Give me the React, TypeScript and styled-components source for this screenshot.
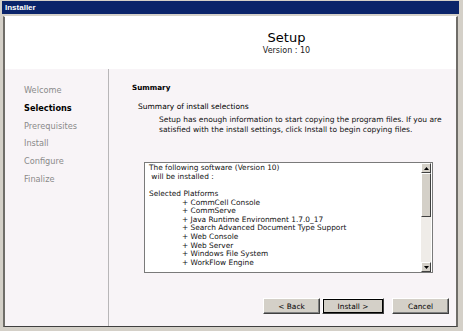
import styled, { createGlobalStyle } from 'styled-components';

const GlobalStyle = createGlobalStyle`
  html, body {
    margin: 0;
    padding: 0;
    background: #d4d0c8;
  }
  * {
    box-sizing: border-box;
  }
`;

const Window = styled.div`
  width: 463px;
  height: 331px;
  background: #d4d0c8;
  padding: 1px 4px 0 2px;
  display: flex;
  flex-direction: column;
  font-family: 'Liberation Sans', Arial, sans-serif;
`;

const TitleBar = styled.div`
  height: 13px;
  background: #0a246a;
  color: #ffffff;
  font-size: 8px;
  font-weight: bold;
  line-height: 13px;
  padding-left: 3px;
`;

const Frame = styled.div`
  margin: 2px 1px 0 1px;
  height: 311px;
  display: flex;
  flex-direction: column;
  border-left: 2px solid #6f6d68;
  border-right: 2px solid #6f6d68;
  border-bottom: 1px solid #404040;
  border-top: 1px solid #ffffff;
`;

const Header = styled.header`
  height: 52px;
  background: #ffffff;
  display: flex;
  flex-direction: column;
  align-items: center;
  padding: 13px 0 0 112px;
  color: #000000;
`;

const Title = styled.div`
  font-family: 'DejaVu Sans', Verdana, sans-serif;
  font-size: 13px;
  line-height: 15px;
`;

const Version = styled.div`
  font-family: 'DejaVu Sans', Verdana, sans-serif;
  font-size: 8px;
  line-height: 12px;
  color: #222222;
`;

const Body = styled.div`
  flex: 1;
  display: flex;
  background: #f8f4f7;
`;

const Sidebar = styled.nav`
  width: 104px;
  border-right: 1px solid #b8b6b8;
  padding: 13px 0 0 19px;
  display: flex;
  flex-direction: column;
`;

const Step = styled.div<{ $active?: boolean }>`
  font-family: 'DejaVu Sans', Verdana, sans-serif;
  font-size: 8.2px;
  line-height: 17.8px;
  color: ${(p) => (p.$active ? '#000000' : '#8a8a8a')};
  font-weight: ${(p) => (p.$active ? 'bold' : 'normal')};
`;

const Main = styled.main`
  flex: 1;
  display: flex;
  flex-direction: column;
  padding: 14px 7px 0 23px;
  color: #000000;
`;

const SectionTitle = styled.div`
  font-family: 'DejaVu Sans', Verdana, sans-serif;
  font-size: 7.2px;
  font-weight: bold;
  line-height: 10px;
`;

const SubTitle = styled.div`
  font-family: 'DejaVu Sans', Verdana, sans-serif;
  font-size: 7.5px;
  line-height: 10px;
  margin: 9px 0 0 6px;
`;

const Paragraph = styled.p`
  font-family: 'DejaVu Sans', Verdana, sans-serif;
  font-size: 7.5px;
  line-height: 10px;
  margin: 3px 0 0 27px;
  color: #111111;
  white-space: nowrap;
`;

const ListBox = styled.div`
  margin: 27px 0 0 12px;
  width: 289px;
  height: 111px;
  border: 1px solid #7a7a7a;
  background: #ffffff;
  display: flex;
`;

const ListText = styled.div`
  flex: 1;
  padding: 1px 0 0 4px;
  overflow: hidden;
`;

const ListLine = styled.div<{ $indent?: boolean }>`
  font-family: 'DejaVu Sans', Verdana, sans-serif;
  font-size: 7.4px;
  line-height: 8.65px;
  height: 8.65px;
  color: #111111;
  white-space: pre;
  padding-left: ${(p) => (p.$indent ? '33px' : '0')};
`;

const ScrollBar = styled.div`
  width: 10px;
  background: #efece8;
  display: flex;
  flex-direction: column;
  margin-right: 1px;
`;

const ScrollArrow = styled.div`
  height: 10px;
  background: #d4d0c8;
  border: 1px solid;
  border-color: #ffffff #404040 #404040 #ffffff;
  display: flex;
  align-items: center;
  justify-content: center;
`;

const Thumb = styled.div`
  height: 44px;
  background: #d4d0c8;
  border: 1px solid;
  border-color: #ffffff #404040 #404040 #ffffff;
`;

const Track = styled.div`
  flex: 1;
`;

const ButtonRow = styled.div`
  margin-top: 25px;
  display: flex;
  justify-content: flex-end;
  align-items: center;
`;

const Button = styled.button<{ $default?: boolean }>`
  height: 16px;
  width: ${(p) => (p.$default ? '62px' : '57px')};
  margin-left: ${(p) => (p.$default ? '2px' : '8px')};
  padding: 0;
  background: #d4d0c8;
  font-family: 'DejaVu Sans', Verdana, sans-serif;
  font-size: 7.4px;
  color: #000000;
  border: 1px solid;
  border-color: #ffffff #404040 #404040 #ffffff;
  outline: ${(p) => (p.$default ? '1px solid #000000' : 'none')};
  outline-offset: -2px;
  box-shadow: inset -1px -1px 0 #808080;
  &:first-child {
    margin-left: 0;
  }
`;

const listing: { text: string; indent?: boolean }[] = [
  { text: 'The following software (Version 10)' },
  { text: ' will be installed :' },
  { text: '' },
  { text: 'Selected Platforms' },
  { text: '+ CommCell Console', indent: true },
  { text: '+ CommServe', indent: true },
  { text: '+ Java Runtime Environment 1.7.0_17', indent: true },
  { text: '+ Search Advanced Document Type Support', indent: true },
  { text: '+ Web Console', indent: true },
  { text: '+ Web Server', indent: true },
  { text: '+ Windows File System', indent: true },
  { text: '+ WorkFlow Engine', indent: true },
];

const steps = ['Welcome', 'Selections', 'Prerequisites', 'Install', 'Configure', 'Finalize'];

function Arrow({ up }: { up?: boolean }) {
  return (
    <svg width="5" height="3" viewBox="0 0 5 3">
      <polygon points={up ? '2.5,0 5,3 0,3' : '0,0 5,0 2.5,3'} fill="#000000" />
    </svg>
  );
}

export default function App() {
  return (
    <>
      <GlobalStyle />
      <Window>
        <TitleBar>Installer</TitleBar>
        <Frame>
          <Header>
            <Title>Setup</Title>
            <Version>Version : 10</Version>
          </Header>
          <Body>
            <Sidebar>
              {steps.map((s) => (
                <Step key={s} $active={s === 'Selections'}>
                  {s}
                </Step>
              ))}
            </Sidebar>
            <Main>
              <SectionTitle>Summary</SectionTitle>
              <SubTitle>Summary of install selections</SubTitle>
              <Paragraph>
                Setup has enough information to start copying the program files. If you are
                <br />
                satisfied with the install settings, click Install to begin copying files.
              </Paragraph>
              <ListBox>
                <ListText>
                  {listing.map((l, i) => (
                    <ListLine key={i} $indent={l.indent}>
                      {l.text}
                    </ListLine>
                  ))}
                </ListText>
                <ScrollBar>
                  <ScrollArrow>
                    <Arrow up />
                  </ScrollArrow>
                  <Thumb />
                  <Track />
                  <ScrollArrow>
                    <Arrow />
                  </ScrollArrow>
                </ScrollBar>
              </ListBox>
              <ButtonRow>
                <Button>&lt; Back</Button>
                <Button $default>Install &gt;</Button>
                <Button>Cancel</Button>
              </ButtonRow>
            </Main>
          </Body>
        </Frame>
      </Window>
    </>
  );
}
